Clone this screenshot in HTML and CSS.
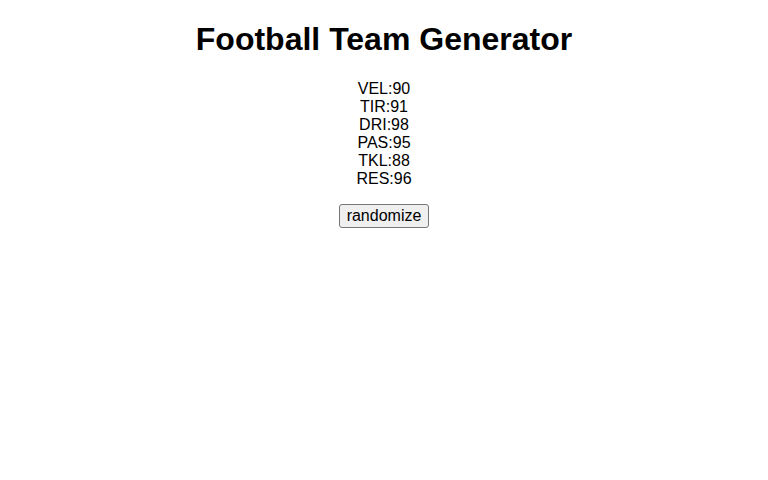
FILE: index.html
```html
<!DOCTYPE html>
<html lang="en">
<head>
<meta charset="utf-8">
<title>Football Team Generator</title>
<link rel="stylesheet" href="styles.css">
</head>
<body>
  <main class="app">
    <h1 class="app-title">Football Team Generator</h1>
    <div class="stats">
      <div class="stat">VEL:90</div>
      <div class="stat">TIR:91</div>
      <div class="stat">DRI:98</div>
      <div class="stat">PAS:95</div>
      <div class="stat">TKL:88</div>
      <div class="stat">RES:96</div>
    </div>
    <div class="actions">
      <button class="btn-randomize" type="button">randomize</button>
    </div>
  </main>
</body>
</html>
```

FILE: styles.css
```css
body {
  margin: 8px;
  background: #ffffff;
  color: #000000;
  font-family: "Liberation Sans", Arial, sans-serif;
  font-size: 16px;
}

.app {
  text-align: center;
}

.app-title {
  font-size: 32px;
  font-weight: bold;
  margin: 13.44px 0 21.44px;
  line-height: 37px;
}

.stats {
  line-height: 18px;
}

.actions {
  margin: 16px 0;
}

.btn-randomize {
  font-family: "Liberation Sans", Arial, sans-serif;
  font-size: 16px;
  line-height: 18px;
  padding: 2px 7px;
  color: #000000;
  background: #efefef;
  border: 1px solid #767676;
  border-radius: 3px;
}
```
